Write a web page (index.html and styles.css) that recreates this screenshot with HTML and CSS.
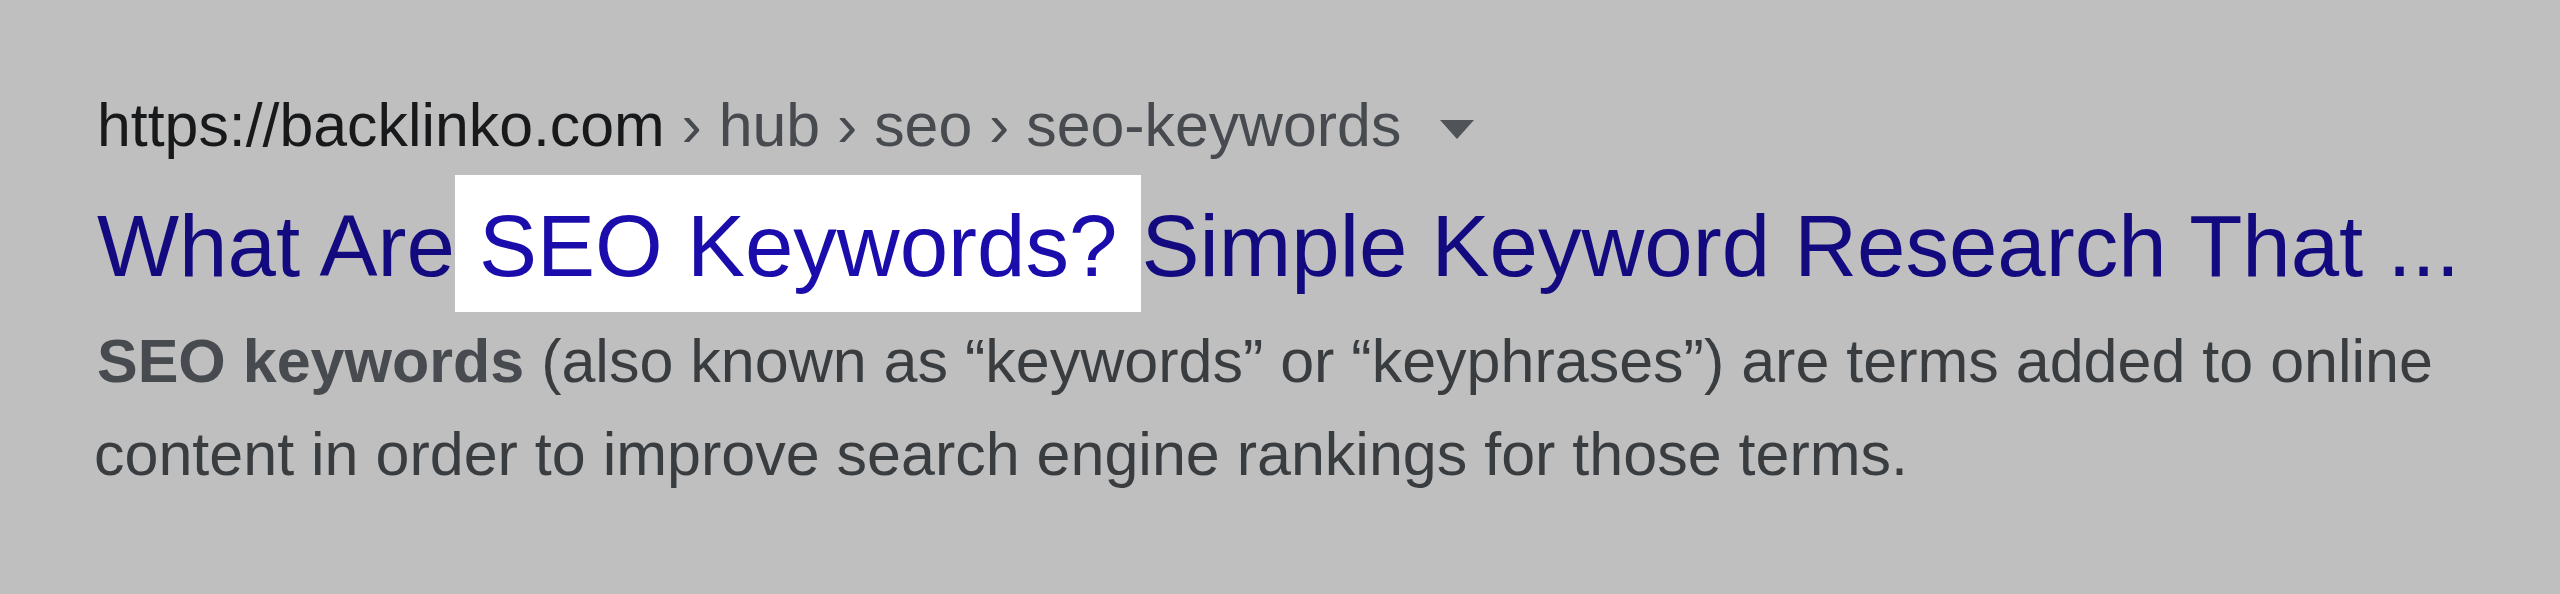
FILE: index.html
```html
<!DOCTYPE html>
<html lang="en">
<head>
<meta charset="utf-8">
<title>SEO Keywords result</title>
<link rel="stylesheet" href="styles.css">
</head>
<body>
<div class="result">
  <div class="url"><span class="domain">https://backlinko.com</span><span class="crumbs"> › hub › seo › seo-keywords</span><svg class="caret" width="34" height="19" viewBox="0 0 34 19"><polygon points="0,0 34,0 17,19"/></svg></div>
  <div class="title">What Are<span class="hl"> SEO Keywords? </span>Simple Keyword Research That ...</div>
  <div class="desc"><b>SEO keywords</b> (also known as “keywords” or “keyphrases”) are terms added to online content in order to improve search engine rankings for those terms.</div>
</div>
</body>
</html>
```
FILE: styles.css
```css
html, body {
  margin: 0;
  padding: 0;
  background: #bfbfbf;
}
body {
  width: 2560px;
  height: 594px;
  overflow: hidden;
  font-family: "Liberation Sans", Arial, sans-serif;
}
.result {
  padding: 85px 0 0 97px;
}
.url {
  font-size: 60.8px;
  line-height: 80px;
  height: 80px;
  white-space: nowrap;
}
.domain {
  color: #18191b;
}
.crumbs {
  color: #474a4e;
}
.caret {
  display: inline-block;
  margin-left: 39px;
  vertical-align: 7px;
  fill: #505357;
}
.title {
  margin-top: 14px;
  font-size: 87px;
  line-height: 134px;
  height: 134px;
  color: #140a80;
  white-space: nowrap;
}
.hl {
  background: #ffffff;
  color: #1a0dab;
  padding: 22px 0 18px;
}
.desc {
  margin-top: 2px;
  margin-left: -3px;
  text-indent: 3px;
  width: 2420px;
  font-size: 61px;
  line-height: 93.4px;
  color: #3a3d40;
}
.desc b {
  color: #474a4e;
  font-weight: bold;
}
```
